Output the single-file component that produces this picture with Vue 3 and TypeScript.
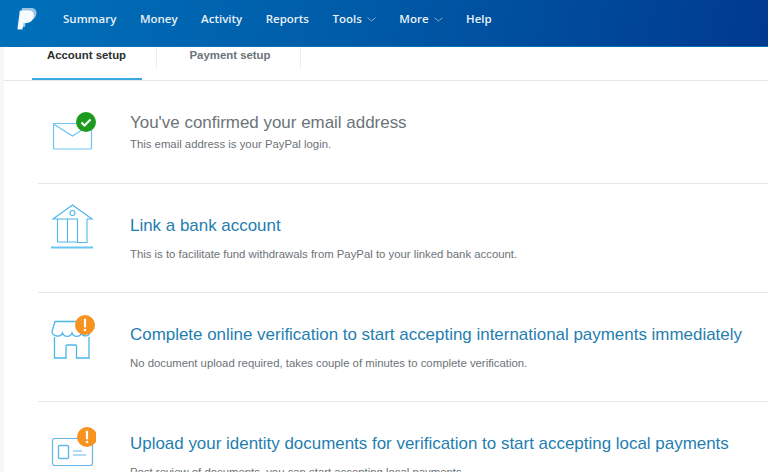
<script setup lang="ts">
const navItems = [
  { label: 'Summary', caret: false },
  { label: 'Money', caret: false },
  { label: 'Activity', caret: false },
  { label: 'Reports', caret: false },
  { label: 'Tools', caret: true },
  { label: 'More', caret: true },
  { label: 'Help', caret: false },
]
</script>

<template>
  <div class="page">
    <header class="topbar">
      <svg class="logo" width="21" height="24" viewBox="0 0 21 24">
        <path d="M5 1h8.500c4 0 6.500 2 6 5.500-.6 4.500-3.500 7-8 7H9l-1 6.500H2.500z" fill="#9cc3e6" />
        <path d="M2.800 3.500h8.500c4 0 6 2 5.500 5.500-.6 4.500-3.500 7-8 7H6.500l-1 6.500H1.500a1 1 0 0 1-1-1.200z" fill="#fff" opacity=".93" />
      </svg>
      <nav class="nav">
        <a v-for="item in navItems" :key="item.label" class="nav-item">
          {{ item.label }}
          <svg v-if="item.caret" class="caret" width="9" height="5" viewBox="0 0 9 5">
            <path d="M.5.700 4.500 4 8.500.700" fill="none" stroke="#9fc0e0" stroke-width=".8" />
          </svg>
        </a>
      </nav>
    </header>

    <main class="content">
      <div class="tabs">
        <div class="tab active">Account setup</div>
        <div class="tab second">Payment setup</div>
      </div>

      <section class="rows">
        <article class="row first">
          <div class="icon">
            <svg width="46" height="50" viewBox="0 0 46 50">
              <g fill="none" stroke="#6cc5f1" stroke-width="1.200">
                <path d="M3.500 22.500h38v24.500a1 1 0 0 1-1 1h-36a1 1 0 0 1-1-1z" />
                <path d="M3.500 23 22.500 35l15-9.500" />
              </g>
              <circle cx="36" cy="21" r="10" fill="#1e9b1f" />
              <path d="M31.500 21.500l3 3 6-6" fill="none" stroke="#fff" stroke-width="2" />
            </svg>
          </div>
          <div class="text">
            <h2 class="title done">You've confirmed your email address</h2>
            <p class="desc">This email address is your PayPal login.</p>
          </div>
        </article>

        <article class="row">
          <div class="icon">
            <svg width="46" height="50" viewBox="0 0 46 50">
              <g fill="none" stroke="#4db6ea" stroke-width="1.100">
                <path d="M7 15H3L22.500 1 42 15h-5" />
                <path d="M7.500 15h20v23h-20zM17.500 15v23M37 15v23.500H27" />
                <circle cx="22.500" cy="9" r="2.500" />
              </g>
              <path d="M1 43.500h42" stroke="#6cc5f1" stroke-width="2" />
            </svg>
          </div>
          <div class="text">
            <h2 class="title">Link a bank account</h2>
            <p class="desc">This is to facilitate fund withdrawals from PayPal to your linked bank account.</p>
          </div>
        </article>

        <article class="row">
          <div class="icon">
            <svg width="46" height="50" viewBox="0 0 46 50">
              <g fill="none" stroke="#4db6ea" stroke-width="1.300">
                <path d="M5 8.500h30l5 10c0 5-7 6-8.500 1.500-1.500 4.500-8 4.500-9.500 0-1.500 4.500-8 4.500-9.500 0C11 24.500 2.500 24 2 18.500z" />
                <path d="M4.500 24v21h11.500V33c0-.7.300-1 1-1h8.500c.7 0 1 .3 1 1v12h12.500V24" />
              </g>
              <circle cx="35" cy="12" r="10" fill="#f7931e" />
              <path d="M35 6.500v7" stroke="#fff" stroke-width="2.200" stroke-linecap="round" />
              <circle cx="35" cy="17" r="1.300" fill="#fff" />
            </svg>
          </div>
          <div class="text">
            <h2 class="title">Complete online verification to start accepting international payments immediately</h2>
            <p class="desc">No document upload required, takes couple of minutes to complete verification.</p>
          </div>
        </article>

        <article class="row">
          <div class="icon">
            <svg width="46" height="50" viewBox="0 0 46 50">
              <g fill="none" stroke="#67b5e8" stroke-width="1.200">
                <rect x="2.500" y="16.500" width="40" height="27" rx="2.500" />
                <rect x="8.500" y="23.500" width="10" height="13" rx="1" stroke-width="1.400" />
                <path d="M23 29h9M23 33h13" />
              </g>
              <circle cx="37" cy="15" r="10" fill="#f7931e" />
              <path d="M37 9.500v7" stroke="#fff" stroke-width="2.200" stroke-linecap="round" />
              <circle cx="37" cy="20" r="1.300" fill="#fff" />
            </svg>
          </div>
          <div class="text">
            <h2 class="title">Upload your identity documents for verification to start accepting local payments</h2>
            <p class="desc">Post review of documents, you can start accepting local payments.</p>
          </div>
        </article>
      </section>
    </main>
  </div>
</template>

<style>
html, body { margin: 0; background: #fff; overflow: hidden; }
</style>

<style scoped>
.page {
  width: 768px;
  height: 472px;
  overflow: hidden;
  background: #f7f7f7;
  font-family: "Liberation Sans", Arial, sans-serif;
}
.topbar {
  height: 47px;
  box-sizing: border-box;
  display: flex;
  align-items: flex-start;
  background: linear-gradient(100deg, #0070ba 0%, #0059a6 50%, #003a8f 100%);
  border-bottom: 1px solid #0a6fb5;
}
.logo { margin: 7px 0 0 17px; flex: none; }
.nav {
  display: flex;
  margin-left: 25px;
  gap: 23.500px;
  padding-top: 10px;
}
.nav-item {
  display: flex;
  align-items: center;
  gap: 5px;
  color: #e8f1f9;
  font: 600 11.500px/18px "Open Sans", sans-serif;
  white-space: nowrap;
}
.content {
  margin-left: 4px;
  background: #fff;
  height: 425px;
}
.tabs {
  height: 33px;
  display: flex;
  border-bottom: 1px solid #e6e6e6;
}
.tab {
  box-sizing: border-box;
  height: 22px;
  padding-top: 2px;
  text-align: center;
  font-size: 11.400px;
  font-weight: 700;
  line-height: 13px;
  color: #6c7378;
  border-right: 1px solid #eee;
  width: 144px;
}
.tab.second { padding-left: 3px; }
.tab.active {
  color: #2c2e2f;
  width: 153px;
  padding-left: 13px;
  position: relative;
}
.tab.active::after {
  content: "";
  position: absolute;
  left: 28px;
  width: 110px;
  top: 31px;
  height: 2px;
  background: #3aa8de;
}
.rows { margin-left: 34px; }
.row {
  height: 109px;
  box-sizing: border-box;
  display: flex;
  border-bottom: 1px solid #e6e6e6;
}
.row.first { height: 103px; }
.icon {
  width: 46px;
  margin-left: 12px;
  padding-top: 20px;
  flex: none;
}
.text { margin-left: 34px; padding-top: 32px; white-space: nowrap; }
.title {
  margin: 0;
  font-size: 16.960px;
  line-height: 20px;
  font-weight: 400;
  color: #1f7eb0;
}
.title.done { color: #6c7378; }
.desc {
  margin: 11px 0 0;
  font-size: 11.350px;
  line-height: 14px;
  color: #6c7378;
}
.row.first .desc { margin-top: 4px; }
</style>
